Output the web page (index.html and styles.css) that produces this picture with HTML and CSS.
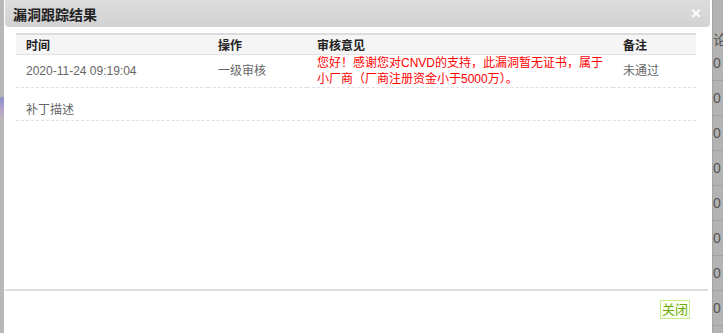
FILE: index.html
```html
<!DOCTYPE html>
<html lang="zh-CN">
<head>
    <meta charset="UTF-8">
    <meta name="viewport" content="width=device-width, initial-scale=1.0">
    <title>漏洞跟踪结果</title>
    <link rel="stylesheet" href="styles.css">
</head>
<body>

    <div class="page">
        <div class="side-left"></div>

        <div class="dialog">
            <div class="dialog-title">
                <span>漏洞跟踪结果</span>
                <span class="close">×</span>
            </div>

            <div class="dialog-body">
                <table class="track-table">
                    <thead>
                        <tr>
                            <th class="col-time">时间</th>
                            <th class="col-op">操作</th>
                            <th class="col-opinion">审核意见</th>
                            <th class="col-note">备注</th>
                        </tr>
                    </thead>
                    <tbody>
                        <tr>
                            <td>2020-11-24 09:19:04</td>
                            <td>一级审核</td>
                            <td class="opinion">您好！感谢您对CNVD的支持，此漏洞暂无证书，属于小厂商（厂商注册资金小于5000万）。</td>
                            <td>未通过</td>
                        </tr>
                    </tbody>
                </table>

                <div class="patch">补丁描述</div>
            </div>

            <div class="dialog-foot">
                <button class="btn-close">关闭</button>
            </div>
        </div>

        <div class="side-right">
            <div class="cell cell-head">论</div>
            <div class="cell">0</div>
            <div class="cell">0</div>
            <div class="cell">0</div>
            <div class="cell">0</div>
            <div class="cell">0</div>
            <div class="cell">0</div>
            <div class="cell">0</div>
            <div class="cell">0</div>
        </div>
    </div>

</body>
</html>
```

FILE: styles.css
```css
body {
    margin: 0;
    padding: 0;
    font-family: 'Liberation Sans', 'Noto Sans CJK SC', sans-serif;
    font-size: 12px;
    background-color: #b3b3b3;
    overflow: hidden;
}

.page {
    display: flex;
    height: 333px;
}

.side-left {
    width: 4px;
    background: linear-gradient(to bottom, #b8b8b8 0, #b8b8b8 96px, #8a8fc8 98px, #b9a3c9 110px, #b8b8b8 120px);
}

.dialog {
    width: 708px;
    background-color: #fff;
    display: flex;
    flex-direction: column;
}

.dialog-title {
    height: 27px;
    margin: 0 2px 0 1px;
    padding: 0 9px 0 8px;
    background: linear-gradient(to bottom, #dcdcdc, #d2d2d2);
    border-radius: 0 0 4px 4px;
    display: flex;
    align-items: center;
    justify-content: space-between;
    font-size: 14px;
    font-weight: bold;
    color: #222;
}

.close {
    color: #fff;
    font-size: 17px;
    font-weight: bold;
    line-height: 1;
}

.dialog-body {
    flex: 1;
    padding: 6px 15px 0 12px;
}

.track-table {
    width: 680px;
    border-collapse: collapse;
    border-top: 2px solid #dcdcdc;
}

.track-table th {
    background-color: #f5f5f5;
    border-bottom: 1px solid #e3e3e3;
    height: 19px;
    padding: 0 0 0 10px;
    text-align: left;
    font-weight: bold;
    color: #222;
}

.track-table td {
    padding: 0 0 0 10px;
    height: 32px;
    color: #666;
    border-bottom: 1px dashed #e0e0e0;
    line-height: 16px;
}

.col-time { width: 182px; }
.col-op { width: 89px; }
.col-opinion { width: 296px; }

.track-table td.opinion {
    color: #f00;
    padding-right: 10px;
}

.patch {
    margin-top: 14px;
    padding: 0 0 2px 10px;
    width: 670px;
    color: #666;
    line-height: 16px;
    border-bottom: 1px dashed #e0e0e0;
}

.dialog-foot {
    box-sizing: border-box;
    height: 44px;
    margin: 0 4px 0 1px;
    border-top: 2px solid #dedede;
    display: flex;
    justify-content: flex-end;
    align-items: flex-start;
    padding: 9px 18px 0 0;
}

.btn-close {
    font-family: 'Liberation Sans', 'Noto Sans CJK SC', sans-serif;
    font-size: 13px;
    color: #6aaa00;
    background: #fbfff2;
    border: 1px solid #c6ec8e;
    padding: 0 1px;
    height: 19px;
    line-height: 16px;
}

.side-right {
    flex: 1;
    border-left: 1px solid #a6a6a6;
    overflow: hidden;
    padding-top: 29px;
}

.cell {
    height: 34px;
    border-bottom: 1px dashed #a0a0a0;
    color: #555;
    font-size: 14px;
    line-height: 34px;
    white-space: nowrap;
}

.cell-head {
    height: 17px;
    line-height: 22px;
    border-bottom: none;
}
```
